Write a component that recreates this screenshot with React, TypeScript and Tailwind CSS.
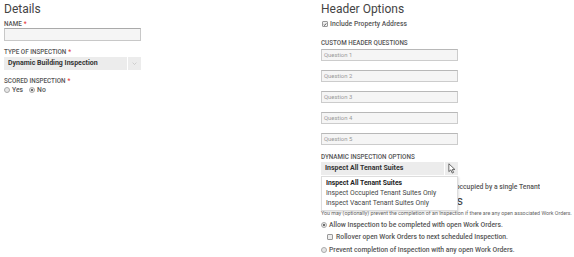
import React from "react";

const Req = () => <span className="ml-[2px] text-[#e53935]">*</span>;

const Label = ({ children, req }: { children: React.ReactNode; req?: boolean }) => (
  <div className="h-[8px] text-[6.3px] leading-[8px] font-medium uppercase text-[#555]">
    {children}
    {req && <Req />}
  </div>
);

const Radio = ({ checked }: { checked?: boolean }) => (
  <span className="inline-flex size-[6px] shrink-0 items-center justify-center rounded-full border border-[#aaa] bg-[#e6e6e6]">
    {checked && <span className="size-[2.5px] rounded-full bg-[#444]" />}
  </span>
);

const Check = ({ checked }: { checked?: boolean }) => (
  <span className="inline-flex size-[6px] shrink-0 items-center justify-center rounded-[1px] border border-[#999] bg-[#eee]">
    {checked && (
      <svg viewBox="0 0 8 8" className="size-[5px]">
        <path d="M1.5 4.2 L3.2 5.8 L6.6 1.8" fill="none" stroke="#333" strokeWidth="1.5" />
      </svg>
    )}
  </span>
);

const QInput = ({ text }: { text: string }) => (
  <div className="flex h-[12px] w-[137px] items-center border border-[#ccc] border-t-[#b8b8b8] bg-[#f5f5f5] px-[2px] text-[5.9px] text-[#9a9a9a]">
    {text}
  </div>
);

export default function App() {
  return (
    <div
      className="relative flex h-[257px] w-[574px] overflow-hidden bg-white text-[#333]"
      style={{ fontFamily: "Roboto, 'Liberation Sans', sans-serif" }}
    >
      {/* Details */}
      <div className="w-[320px] pl-[4px] pt-[2px]">
        <h2 className="h-[14px] text-[12px] leading-[14px] text-[#444]">Details</h2>
        <div className="mt-[4px]">
          <Label req>Name</Label>
        </div>
        <div className="h-[13px] w-[137px] border border-[#c8c8c8] border-t-[#aaa] bg-[#f5f5f5]" />
        <div className="mt-[7px]">
          <Label req>Type of Inspection</Label>
        </div>
        <div className="mt-[1px] flex h-[13px] w-[137px] bg-[#ececec]">
          <div className="flex flex-1 items-center pl-[4px] text-[7px] font-bold text-[#333]">
            Dynamic Building Inspection
          </div>
          <div className="flex w-[14px] items-center justify-center border-l border-white">
            <svg viewBox="0 0 8 5" className="w-[5px]">
              <path d="M1 1 L4 4 L7 1" fill="none" stroke="#bbb" strokeWidth="1" />
            </svg>
          </div>
        </div>
        <div className="mt-[7px]">
          <Label req>Scored Inspection</Label>
        </div>
        <div className="mt-[1px] flex h-[8px] items-center text-[6.8px] font-medium text-[#555]">
          <Radio />
          <span className="ml-[2px] mr-[6px]">Yes</span>
          <Radio checked />
          <span className="ml-[2px]">No</span>
        </div>
      </div>

      {/* Header options */}
      <div className="relative flex-1 pl-[1px] pt-[2px]">
        <h2 className="h-[14px] text-[12px] leading-[14px] text-[#444]">Header Options</h2>
        <div className="mt-[4px] flex h-[8px] items-center gap-[2px] pl-[1px] text-[6.8px] font-medium text-[#555]">
          <Check checked />
          <span>Include Property Address</span>
        </div>
        <div className="mt-[11px]">
          <Label>Custom Header Questions</Label>
        </div>
        <div className="mt-[2px] flex flex-col gap-[9px]">
          <QInput text="Question 1" />
          <QInput text="Question 2" />
          <QInput text="Question 3" />
          <QInput text="Question 4" />
          <QInput text="Question 5" />
        </div>
        <div className="mt-[8px]">
          <Label>Dynamic Inspection Options</Label>
        </div>
        <div className="mt-[1px] flex h-[13px] w-[137px] bg-[#ececec]">
          <div className="flex flex-1 items-center pl-[4px] text-[7px] font-bold text-[#333]">
            Inspect All Tenant Suites
          </div>
          <div className="w-[14px] border-l border-white" />
        </div>

        {/* partly hidden by the open menu */}
        <div className="mt-[8px] flex h-[8px] w-[219px] items-center justify-end gap-[3px] overflow-hidden whitespace-nowrap text-[6.8px] font-medium text-[#555]">
          <Check />
          <span>Only include Tenant Suites that are occupied by a single Tenant</span>
        </div>
        <div className="mt-[3px] flex h-[14px] w-[142px] justify-end overflow-hidden whitespace-nowrap">
          <h2 className="text-[12px] leading-[14px] text-[#444]">Open Work Order Restrictions</h2>
        </div>
        <p className="mt-[2px] h-[7px] whitespace-nowrap text-[5.3px] leading-[7px] text-[#666]">
          You may (optionally) prevent the completion of an Inspection if there are any open associated Work Orders.
        </p>
        <div className="mt-[4px] flex h-[8px] items-center gap-[2px] text-[6.8px] font-medium text-[#555]">
          <Radio checked />
          <span className="whitespace-nowrap">Allow Inspection to be completed with open Work Orders.</span>
        </div>
        <div className="mt-[4px] flex h-[8px] items-center gap-[3px] pl-[6px] text-[6.8px] font-medium text-[#555]">
          <Check />
          <span className="whitespace-nowrap">Rollover open Work Orders to next scheduled Inspection.</span>
        </div>
        <div className="mt-[5px] flex h-[8px] items-center gap-[2px] text-[6.8px] font-medium text-[#555]">
          <Radio />
          <span className="whitespace-nowrap">Prevent completion of Inspection with any open Work Orders.</span>
        </div>

        {/* open select menu */}
        <div className="absolute left-[1px] top-[176px] w-[137px] border border-[#ddd] bg-white pb-[2px] pt-[1px] text-[6.8px] leading-[10px] text-[#444] shadow-[1px_1px_2px_rgba(0,0,0,0.12)]">
          <div className="pl-[4px] font-bold text-[#222]">Inspect All Tenant Suites</div>
          <div className="pl-[4px]">Inspect Occupied Tenant Suites Only</div>
          <div className="pl-[4px]">Inspect Vacant Tenant Suites Only</div>
        </div>
        <svg viewBox="0 0 10 14" className="absolute left-[128px] top-[163px] h-[11px] w-[8px]">
          <path d="M1 1 L1 11 L3.5 8.8 L5.3 12.8 L7 12 L5.3 8.2 L8.6 8.2 Z" fill="white" stroke="#333" strokeWidth="0.9" strokeLinejoin="round" />
        </svg>
      </div>
    </div>
  );
}
